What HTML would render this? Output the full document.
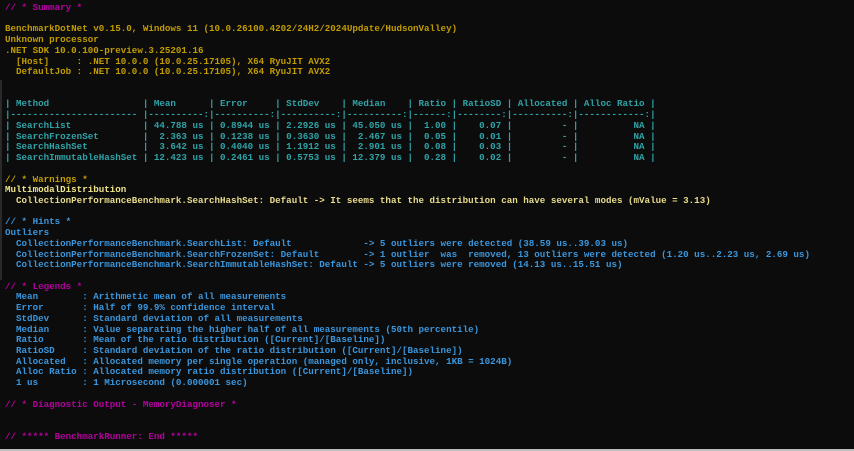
<!DOCTYPE html>
<html><head><meta charset="utf-8"><style>
html,body{margin:0;padding:0;background:#0c0c0c;width:854px;height:451px;overflow:hidden}
pre{margin:0;position:absolute;left:5px;top:3px;font-family:"Liberation Mono",monospace;font-size:9.2px;line-height:10.72px;color:#cccccc;white-space:pre;font-weight:bold}
.m{color:#b4009e}.y{color:#c19c00}.c{color:#2fa3a8}.b{color:#3a96dd}.ly{color:#e8dc8c}.wy{color:#f0e68c}
#bar{position:absolute;left:0;bottom:0;width:854px;height:2px;background:#bdbdbd}
#lb{position:absolute;left:0;top:80px;width:2px;height:200px;background:#2a2a2a}
</style></head><body>
<div id="lb"></div>
<pre><span class="m">// * Summary *</span>

<span class="y">BenchmarkDotNet v0.15.0, Windows 11 (10.0.26100.4202/24H2/2024Update/HudsonValley)
Unknown processor
.NET SDK 10.0.100-preview.3.25201.16
  [Host]     : .NET 10.0.0 (10.0.25.17105), X64 RyuJIT AVX2
  DefaultJob : .NET 10.0.0 (10.0.25.17105), X64 RyuJIT AVX2</span>


<span class="c">| Method                 | Mean      | Error     | StdDev    | Median    | Ratio | RatioSD | Allocated | Alloc Ratio |
|----------------------- |----------:|----------:|----------:|----------:|------:|--------:|----------:|------------:|
| SearchList             | 44.788 us | 0.8944 us | 2.2926 us | 45.050 us |  1.00 |    0.07 |         - |          NA |
| SearchFrozenSet        |  2.363 us | 0.1238 us | 0.3630 us |  2.467 us |  0.05 |    0.01 |         - |          NA |
| SearchHashSet          |  3.642 us | 0.4040 us | 1.1912 us |  2.901 us |  0.08 |    0.03 |         - |          NA |
| SearchImmutableHashSet | 12.423 us | 0.2461 us | 0.5753 us | 12.379 us |  0.28 |    0.02 |         - |          NA |</span>

<span class="y">// * Warnings *</span>
<span class="wy">MultimodalDistribution</span>
<span class="ly">  CollectionPerformanceBenchmark.SearchHashSet: Default -> It seems that the distribution can have several modes (mValue = 3.13)</span>

<span class="b">// * Hints *
Outliers
  CollectionPerformanceBenchmark.SearchList: Default             -> 5 outliers were detected (38.59 us..39.03 us)
  CollectionPerformanceBenchmark.SearchFrozenSet: Default        -> 1 outlier  was  removed, 13 outliers were detected (1.20 us..2.23 us, 2.69 us)
  CollectionPerformanceBenchmark.SearchImmutableHashSet: Default -> 5 outliers were removed (14.13 us..15.51 us)</span>

<span class="m">// * Legends *</span>
<span class="b">  Mean        : Arithmetic mean of all measurements
  Error       : Half of 99.9% confidence interval
  StdDev      : Standard deviation of all measurements
  Median      : Value separating the higher half of all measurements (50th percentile)
  Ratio       : Mean of the ratio distribution ([Current]/[Baseline])
  RatioSD     : Standard deviation of the ratio distribution ([Current]/[Baseline])
  Allocated   : Allocated memory per single operation (managed only, inclusive, 1KB = 1024B)
  Alloc Ratio : Allocated memory ratio distribution ([Current]/[Baseline])
  1 us        : 1 Microsecond (0.000001 sec)</span>

<span class="m">// * Diagnostic Output - MemoryDiagnoser *</span>


<span class="m">// ***** BenchmarkRunner: End *****</span>
</pre>
<div id="bar"></div>
</body></html>
